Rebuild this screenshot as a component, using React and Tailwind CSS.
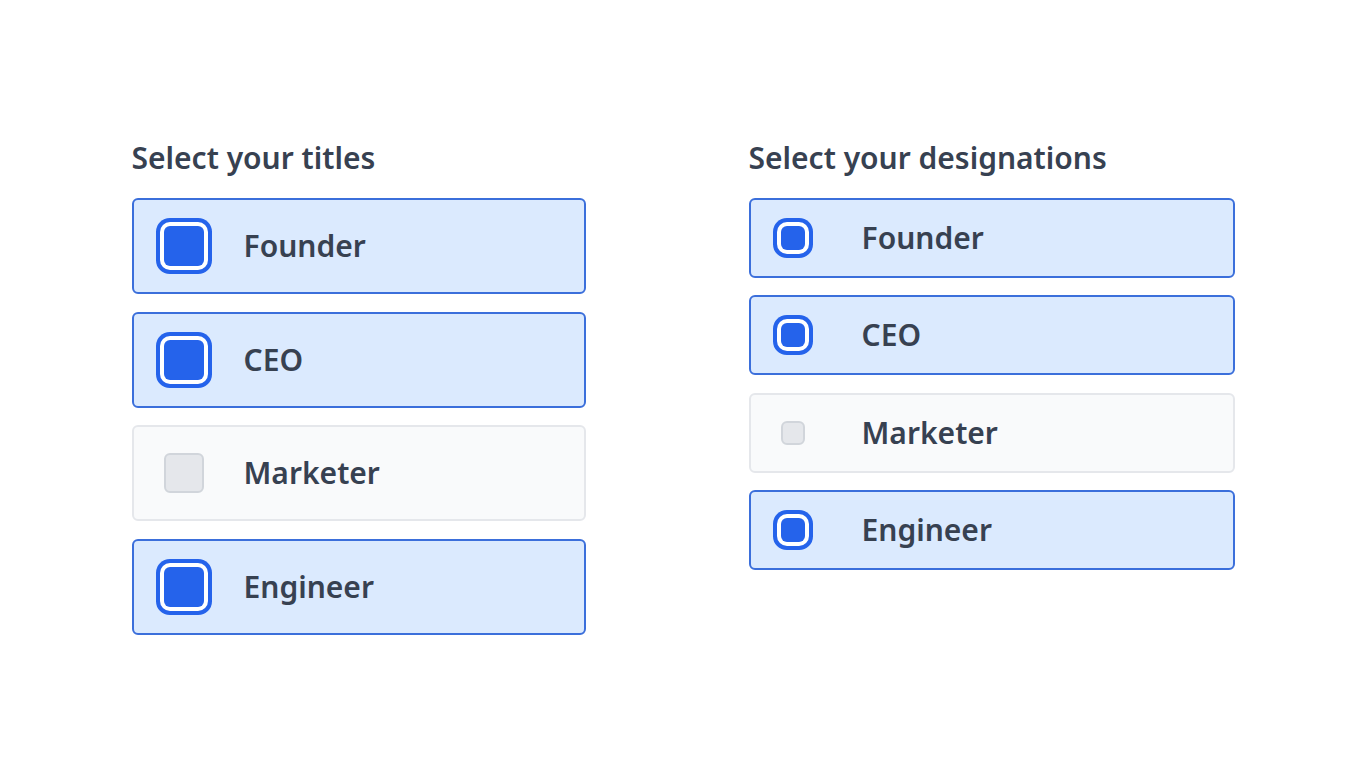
import React from "react";

const titles = [
  { label: "Founder", checked: true },
  { label: "CEO", checked: true },
  { label: "Marketer", checked: false },
  { label: "Engineer", checked: true },
];

function BigBox({ checked }) {
  return checked ? (
    <span className="block w-10 h-10 rounded-md bg-[#2563eb] ring-4 ring-[#2563eb] ring-offset-4 ring-offset-white shrink-0" />
  ) : (
    <span className="block w-10 h-10 rounded-md bg-[#e5e7eb] border-2 border-[#d1d5db] shrink-0" />
  );
}

function SmallBox({ checked }) {
  return checked ? (
    <span className="block w-6 h-6 rounded-md bg-[#2563eb] ring-4 ring-[#2563eb] ring-offset-4 ring-offset-white shrink-0" />
  ) : (
    <span className="block w-6 h-6 rounded-md bg-[#e5e7eb] border-2 border-[#d1d5db] shrink-0" />
  );
}

function Card({ checked, children, big, label }) {
  return (
    <div
      className={
        "flex items-center rounded-md border-2 px-[30px] " +
        (big ? "h-[96px] " : "h-[80px] ") +
        (checked ? "bg-[#dbeafe] border-[#3b6fdb]" : "bg-[#f9fafb] border-[#e5e7eb]")
      }
    >
      {children}
      <span
        className={
          "text-[30px] font-semibold text-[#374151] leading-none " +
          (big ? "ml-[40px]" : "ml-[57px]")
        }
      >
        {label}
      </span>
    </div>
  );
}

export default function App() {
  return (
    <div
      className="min-h-screen bg-white flex justify-center pt-[138px]"
      style={{ fontFamily: '"Noto Sans", "Open Sans", sans-serif' }}
    >
      <div className="flex gap-[163px]">
        <div className="w-[454px]">
          <h2 className="text-[30px] font-semibold text-[#374151] leading-[40px] mb-[20px]">
            Select your titles
          </h2>
          <div className="flex flex-col gap-[17.6px]">
            {titles.map((t) => (
              <Card key={t.label} checked={t.checked} big label={t.label}>
                <BigBox checked={t.checked} />
              </Card>
            ))}
          </div>
        </div>
        <div className="w-[486px]">
          <h2 className="text-[30px] font-semibold text-[#374151] leading-[40px] mb-[20px]">
            Select your designations
          </h2>
          <div className="flex flex-col gap-[17.3px]">
            {titles.map((t) => (
              <Card key={t.label} checked={t.checked} label={t.label}>
                <SmallBox checked={t.checked} />
              </Card>
            ))}
          </div>
        </div>
      </div>
    </div>
  );
}
